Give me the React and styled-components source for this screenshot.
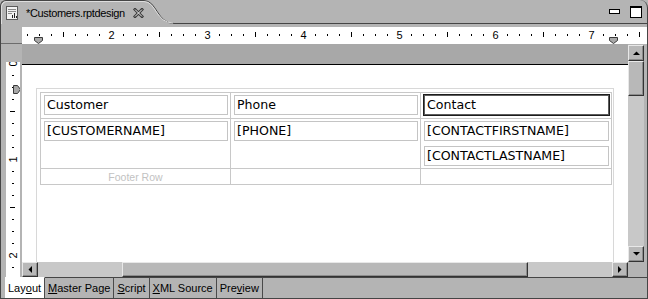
import React from 'react';
import styled, { createGlobalStyle, css } from 'styled-components';

const FACE = '#b4b4b4';
const EDGE = '#454545';
const GRID = '#c8c8c8';
const INCH = 96;
const STEP = 12;

const GlobalStyle = createGlobalStyle`
  html, body {
    margin: 0;
    padding: 0;
    background: #ffffff;
  }
`;

const Frame = styled.div`
  width: 648px;
  height: 299px;
  display: flex;
  flex-direction: column;
  background: ${FACE};
  font-family: 'Liberation Sans', Arial, sans-serif;
  color: #000;
  overflow: hidden;
`;

/* ---------- editor title row ---------- */

const TitleRow = styled.div`
  display: flex;
  flex: none;
  height: 24px;
`;

const EditorTab = styled.div`
  box-sizing: border-box;
  width: 144px;
  height: 24px;
  display: flex;
  align-items: center;
  padding: 1px 0 0 5px;
  border-top: 1px solid ${EDGE};
  border-left: 1px solid ${EDGE};
  border-top-left-radius: 6px;
  box-shadow: inset 1px 1px 0 #dedede;
`;

const TabTitle = styled.span`
  margin-left: 8px;
  font-size: 11px;
  letter-spacing: -0.35px;
  white-space: nowrap;
`;

const Glyph = styled.svg`
  display: block;
  flex: none;
  margin-left: ${(p) => p.$ml || 0}px;
`;

const TitleFill = styled.div`
  box-sizing: border-box;
  flex: 1;
  display: flex;
  align-items: center;
  justify-content: flex-end;
  gap: 10px;
  padding-right: 5px;
  border-bottom: 1px solid ${EDGE};
  border-right: 1px solid ${EDGE};
  border-top-right-radius: 8px;
`;

const MinBox = styled.div`
  box-sizing: border-box;
  width: 11px;
  height: 5px;
  border: 1px solid #000;
  background: #fff;
`;

const MaxBox = styled.div`
  box-sizing: border-box;
  width: 12px;
  height: 12px;
  border: 1px solid #000;
  border-top-width: 2px;
  background: #fff;
`;

/* ---------- workbench ---------- */

const Workbench = styled.div`
  box-sizing: border-box;
  flex: none;
  height: 253px;
  padding-top: 3px;
  display: grid;
  grid-template-columns: 21px 606px 16px 3px;
  grid-template-rows: 17px 218px 15px;
  border-left: 1px solid ${EDGE};
  border-right: 1px solid ${EDGE};
`;

const RulerCorner = styled.div`
  box-sizing: border-box;
  grid-column: 1;
  grid-row: 1;
  border-bottom: 1px solid #6c6c6c;
`;

const HRulerStrip = styled.div`
  grid-column: 2 / 5;
  grid-row: 1;
  background: #fff;
  overflow: hidden;
`;

const VRulerStrip = styled.div`
  grid-column: 1;
  grid-row: 2 / 4;
  margin: 18px 2px 0 5px;
  background: #fff;
  overflow: hidden;
`;

const Canvas = styled.div`
  grid-column: 2;
  grid-row: 2;
  display: flex;
  flex-direction: column;
  background: #a8a8a8;
  overflow: hidden;
`;

const Page = styled.div`
  flex: 1;
  min-height: 0;
  margin-top: 20px;
  border-top: 1px solid #000;
  background: #fff;
  display: flex;
  flex-direction: column;
  padding: 23px 0 0 14px;
`;

const OuterFrame = styled.div`
  box-sizing: border-box;
  width: 578px;
  flex: 1;
  border: 1px solid #d8d8d8;
  border-bottom: none;
  padding: 3px 1px 0 3px;
`;

const Table = styled.div`
  display: grid;
  grid-template-columns: 190px 190px 191px;
  grid-template-rows: 26px 50px 16px;
  border-top: 1px solid ${GRID};
  border-left: 1px solid ${GRID};
`;

const Cell = styled.div`
  box-sizing: border-box;
  min-width: 0;
  border-right: 1px solid ${GRID};
  border-bottom: 1px solid ${GRID};
  padding: 2px 2px 0 3px;
  display: flex;
  flex-direction: column;
  gap: 5px;
  ${(p) =>
    p.$footer &&
    `
    padding: 0;
    align-items: center;
    justify-content: center;
  `}
`;

const FieldBox = styled.div`
  box-sizing: border-box;
  height: 20px;
  border: 1px solid #c4c4c4;
  padding: 0 2px;
  font-family: 'DejaVu Sans', Verdana, sans-serif;
  font-size: 12.6px;
  line-height: 18px;
  white-space: nowrap;
  overflow: hidden;
  ${(p) =>
    p.$selected &&
    css`
      border-color: #5c5c5c;
      outline: 1px solid #1c1c1c;
    `}
`;

const FooterText = styled.span`
  font-size: 10.5px;
  color: #c2c2c2;
`;

/* ---------- scrollbars ---------- */

const VScroll = styled.div`
  grid-column: 3;
  grid-row: 2;
  margin-top: 1px;
  display: flex;
  flex-direction: column;
`;

const HScroll = styled.div`
  grid-column: 2;
  grid-row: 3;
  display: flex;
`;

const Raised = styled.div`
  box-sizing: border-box;
  flex: none;
  width: ${(p) => p.$w || 16}px;
  height: ${(p) => p.$h || 16}px;
  background: #b8b8b8;
  border: 1px solid;
  border-color: #e8e8e8 #333 #333 #e8e8e8;
  box-shadow: inset -1px -1px 0 #8c8c8c;
  display: flex;
  align-items: center;
  justify-content: center;
`;

const Track = styled.div`
  flex: ${(p) => (p.$size ? 'none' : 1)};
  ${(p) => (p.$vertical ? 'height' : 'width')}: ${(p) => (p.$size ? `${p.$size}px` : 'auto')};
  background: #c8c8c8;
`;

/* ---------- page tabs ---------- */

const PageTabs = styled.div`
  box-sizing: border-box;
  flex: none;
  height: 22px;
  display: flex;
  padding-left: 4px;
  border-left: 1px solid ${EDGE};
  border-right: 1px solid ${EDGE};
  border-bottom: 1px solid ${EDGE};
`;

const PageTab = styled.div`
  box-sizing: border-box;
  height: 21px;
  padding: 0 3px;
  display: flex;
  align-items: center;
  font-size: 11px;
  white-space: nowrap;
  border-top: 1px solid ${EDGE};
  border-right: 1px solid #4a4a4a;
  ${(p) =>
    p.$active &&
    `
    background: #fff;
    border-top-color: #fff;
  `}
`;

const TabsRest = styled.div`
  flex: 1;
  border-top: 1px solid ${EDGE};
`;

/* ---------- drawings ---------- */

const Arrow = ({ dir }) => {
  const pts = {
    up: '0,4 7,4 3.5,0.5',
    down: '0,0 7,0 3.5,3.5',
    left: '4,0 4,7 0.5,3.5',
    right: '0,0 0,7 3.5,3.5',
  }[dir];
  const vertical = dir === 'up' || dir === 'down';
  return (
    <Glyph width={vertical ? 7 : 4} height={vertical ? 4 : 7}>
      <polygon points={pts} fill="#000" />
    </Glyph>
  );
};

const ReportIcon = () => (
  <Glyph width="12" height="14" viewBox="0 0 12 14">
    <rect x="0.5" y="0.5" width="11" height="13" fill="#f2f2f2" stroke="#5a5a5a" />
    <path d="M2 3.5H10M2 5.5H10M2 7.5H6" stroke="#8a8a8a" />
    <rect x="6" y="9" width="1" height="3" fill="#222" />
    <rect x="8" y="7" width="1" height="5" fill="#222" />
    <rect x="10" y="10" width="1" height="2" fill="#222" />
  </Glyph>
);

const CloseIcon = () => (
  <Glyph $ml={8} width="11" height="10" viewBox="0 0 11 10">
    <path d="M2 1.5L9 8.5M9 1.5L2 8.5" stroke="#3a3a3a" strokeWidth="3" strokeLinecap="square" />
    <path d="M2 1.5L9 8.5M9 1.5L2 8.5" stroke="#f4f4f4" strokeWidth="1" />
  </Glyph>
);

const TabCurve = () => (
  <Glyph width="30" height="24" viewBox="0 0 30 24">
    <path d="M0 0.5C13 0.5 13 23.5 30 23.5" fill="none" stroke={EDGE} />
    <path d="M0 1.5C12 1.5 12 23 29 23" fill="none" stroke="#dedede" />
  </Glyph>
);

const marker = (x, y) => `${x - 4},${y} ${x + 4},${y} ${x + 4},${y + 3} ${x},${y + 6} ${x - 4},${y + 3}`;
const sideMarker = (x, y) => `${x},${y - 4} ${x + 4},${y - 4} ${x + 7},${y} ${x + 4},${y + 4} ${x},${y + 4}`;

const HorizontalRuler = () => {
  const width = 625;
  const origin = 89 - 2 * INCH;
  const marks = [];
  for (let k = 0; origin + k * STEP < width; k++) {
    const x = origin + k * STEP + 0.5;
    if (x < 0) continue;
    if (k % 8 === 0) {
      marks.push(
        <text key={k} x={x} y="12" textAnchor="middle" fontSize="11" fontFamily="Liberation Sans, Arial, sans-serif">
          {k / 8}
        </text>
      );
    } else if (k % 4 === 0) {
      marks.push(<line key={k} x1={x} x2={x} y1="5" y2="10" stroke="#000" />);
    } else {
      marks.push(<line key={k} x1={x} x2={x} y1="7" y2="9" stroke="#000" />);
    }
  }
  return (
    <svg width={width} height="17" style={{ display: 'block' }}>
      {marks}
      <polygon points={marker(16.5, 10.5)} fill="#a8a8a8" stroke="#3a3a3a" />
      <polygon points={marker(591.5, 10.5)} fill="#a8a8a8" stroke="#3a3a3a" />
    </svg>
  );
};

const VerticalRuler = () => {
  const height = 215;
  const origin = 1;
  const marks = [];
  for (let k = 0; origin + k * STEP < height + 6; k++) {
    const y = origin + k * STEP + 0.5;
    if (k % 8 === 0) {
      marks.push(
        <text
          key={k}
          x="7"
          y={y}
          textAnchor="middle"
          dominantBaseline="central"
          fontSize="11"
          fontFamily="Liberation Sans, Arial, sans-serif"
          transform={`rotate(-90 7 ${y})`}
        >
          {k / 8}
        </text>
      );
    } else if (k % 4 === 0) {
      marks.push(<line key={k} x1="4" x2="9" y1={y} y2={y} stroke="#000" />);
    } else {
      marks.push(<line key={k} x1="6" x2="8" y1={y} y2={y} stroke="#000" />);
    }
  }
  return (
    <svg width="14" height={height} style={{ display: 'block' }}>
      {marks}
      <polygon points={sideMarker(7.5, 27.5)} fill="#a8a8a8" stroke="#3a3a3a" />
    </svg>
  );
};

/* ---------- data ---------- */

const columns = [
  { header: 'Customer', details: ['[CUSTOMERNAME]'] },
  { header: 'Phone', details: ['[PHONE]'] },
  { header: 'Contact', selected: true, details: ['[CONTACTFIRSTNAME]', '[CONTACTLASTNAME]'] },
];

const pageTabs = [
  { label: ['Lay', 'o', 'ut'], active: true },
  { label: ['', 'M', 'aster Page'] },
  { label: ['', 'S', 'cript'] },
  { label: ['', 'X', 'ML Source'] },
  { label: ['Pre', 'v', 'iew'] },
];

export default function App() {
  return (
    <>
      <GlobalStyle />
      <Frame>
        <TitleRow>
          <EditorTab>
            <ReportIcon />
            <TabTitle>*Customers.rptdesign</TabTitle>
            <CloseIcon />
          </EditorTab>
          <TabCurve />
          <TitleFill>
            <MinBox />
            <MaxBox />
          </TitleFill>
        </TitleRow>

        <Workbench>
          <RulerCorner />
          <HRulerStrip>
            <HorizontalRuler />
          </HRulerStrip>
          <VRulerStrip>
            <VerticalRuler />
          </VRulerStrip>

          <Canvas>
            <Page>
              <OuterFrame>
                <Table>
                  {columns.map((c) => (
                    <Cell key={c.header}>
                      <FieldBox $selected={c.selected}>{c.header}</FieldBox>
                    </Cell>
                  ))}
                  {columns.map((c) => (
                    <Cell key={`${c.header}-detail`}>
                      {c.details.map((d) => (
                        <FieldBox key={d}>{d}</FieldBox>
                      ))}
                    </Cell>
                  ))}
                  <Cell $footer>
                    <FooterText>Footer Row</FooterText>
                  </Cell>
                  <Cell $footer />
                  <Cell $footer />
                </Table>
              </OuterFrame>
            </Page>
          </Canvas>

          <VScroll>
            <Raised>
              <Arrow dir="up" />
            </Raised>
            <Raised $h={35} />
            <Track $vertical />
            <Raised>
              <Arrow dir="down" />
            </Raised>
          </VScroll>

          <HScroll>
            <Raised $h={15}>
              <Arrow dir="left" />
            </Raised>
            <Track $size={84} />
            <Raised $w={406} $h={15} />
            <Track />
            <Raised $h={15}>
              <Arrow dir="right" />
            </Raised>
          </HScroll>
        </Workbench>

        <PageTabs>
          {pageTabs.map(({ label: [pre, key, post], active }) => (
            <PageTab key={pre + key + post} $active={active}>
              {pre}
              <u>{key}</u>
              {post}
            </PageTab>
          ))}
          <TabsRest />
        </PageTabs>
      </Frame>
    </>
  );
}
